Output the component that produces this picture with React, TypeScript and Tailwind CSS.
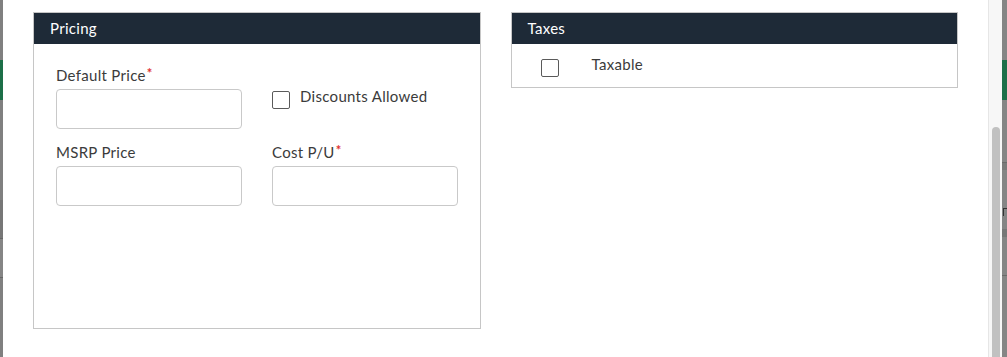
import React from "react";

function Required() {
  return <span className="text-[#e0312f] text-[13px] font-bold align-top relative top-[-2px] ml-[1px]">*</span>;
}

function Field({ label, required }: { label: string; required?: boolean }) {
  return (
    <div className="flex flex-col">
      <label className="text-[15px] leading-5 tracking-[0.3px] text-[#3b3b3b] mb-1 h-5">
        {label}
        {required && <Required />}
      </label>
      <input
        type="text"
        className="h-10 w-full rounded-[4px] border border-[#c9c9c9] bg-white px-2 outline-none"
      />
    </div>
  );
}

function Box() {
  return <span className="block h-[18px] w-[18px] rounded-[2px] border border-[#5a5a5a] bg-white" />;
}

function PanelHeader({ title }: { title: string }) {
  return (
    <div className="h-[31px] bg-[#1e2a37] px-4 flex items-center text-[15px] tracking-[0.3px] text-white">{title}</div>
  );
}

export default function App() {
  return (
    <div className="flex h-[357px] w-[1007px] overflow-hidden bg-white" style={{ fontFamily: "Lato, 'Open Sans', sans-serif" }}>
      {/* dimmed page edge, left */}
      <div className="flex w-[3px] flex-col bg-[#808080]">
        <div className="h-[60px]" />
        <div className="h-[40px] bg-[#1d6f48]" />
        <div className="h-[100px]" />
        <div className="h-[38px] bg-[#777777]" />
        <div className="h-[1px] bg-[#666666]" />
        <div className="h-[38px] bg-[#858585]" />
        <div className="h-[1px] bg-[#666666]" />
      </div>

      {/* modal body */}
      <div className="flex flex-1 bg-white">
        <div className="grid flex-1 grid-cols-2 items-start gap-[30px] px-[30px] pt-[12px]">
          <section className="h-[317px] border border-[#c6c6c6]">
            <PanelHeader title="Pricing" />
            <div className="grid grid-cols-[186px_186px] gap-x-[30px] gap-y-[13px] pl-[22px] pt-[21px]">
              <Field label="Default Price" required />
              <div className="pt-6">
                <label className="flex items-center gap-[10px] text-[15px] tracking-[0.3px] text-[#3b3b3b]">
                  <Box />
                  <span className="relative top-[-4px]">Discounts Allowed</span>
                </label>
              </div>
              <Field label="MSRP Price" />
              <Field label="Cost P/U" required />
            </div>
          </section>

          <section className="h-[76px] border border-[#c6c6c6]">
            <PanelHeader title="Taxes" />
            <div className="flex items-center pl-[29px] pt-[13px]">
              <Box />
              <span className="ml-[33px] relative top-[-4px] text-[15px] tracking-[0.3px] text-[#3b3b3b]">Taxable</span>
            </div>
          </section>
        </div>

        {/* scrollbar */}
        <div className="relative w-[14px] border-l border-[#e6e6e6] bg-[#f7f7f7]">
          <div className="absolute left-[3px] top-[127px] h-[240px] w-[8px] rounded-full bg-[#c1c1c1]" />
        </div>
      </div>

      {/* dimmed page edge, right */}
      <div className="flex w-[5px] flex-col bg-[#858585]">
        <div className="h-[60px]" />
        <div className="h-[40px] bg-[#1d6f48]" />
        <div className="h-[62px]" />
        <div className="h-[1px] bg-[#6a6a6a]" />
        <div className="h-[7px] bg-[#7a7a7a]" />
        <div className="h-[38px]" />
        <div className="ml-[1px] h-[8px] w-[4px] border-l border-t border-[#333]" />
        <div className="h-[13px]" />
        <div className="h-[8px] bg-[#777777]" />
        <div className="h-[38px]" />
        <div className="h-[1px] bg-[#6a6a6a]" />
      </div>
    </div>
  );
}
